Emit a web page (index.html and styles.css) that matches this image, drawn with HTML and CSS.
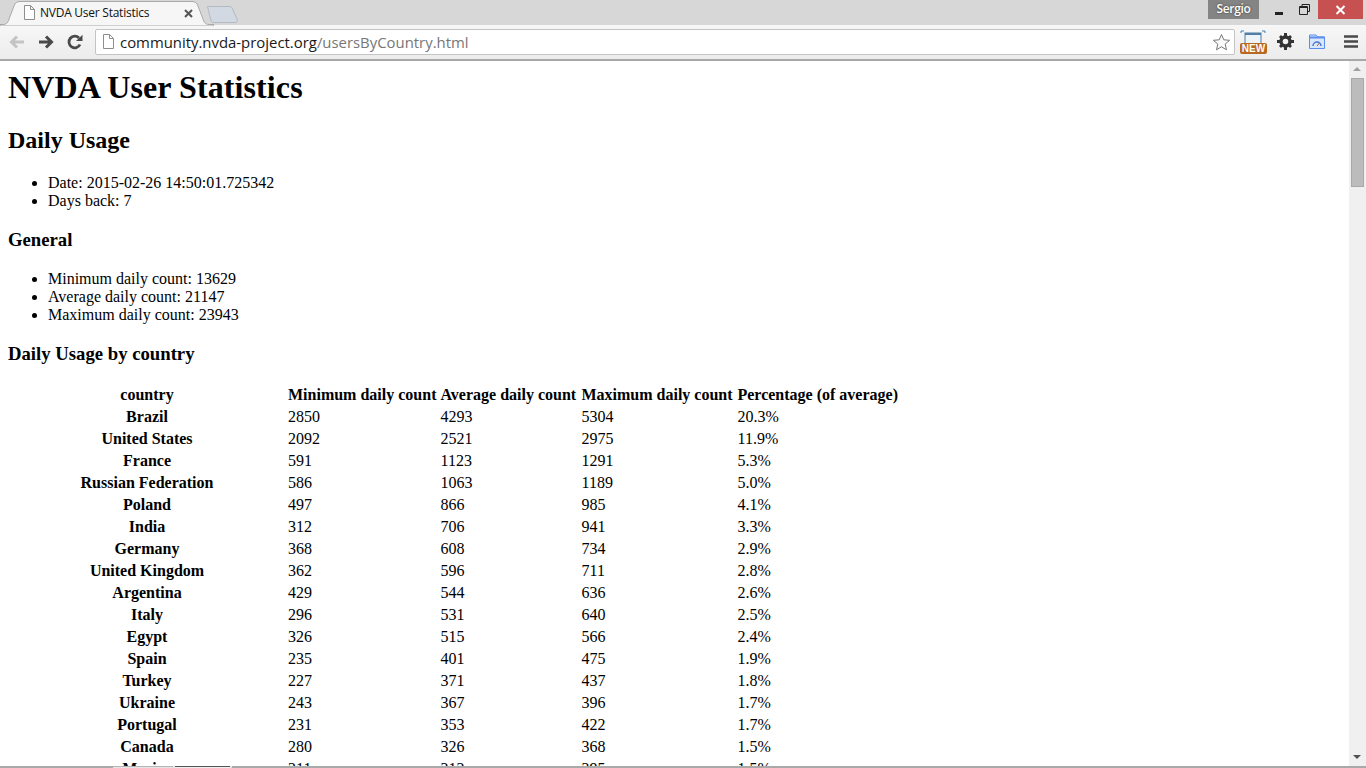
FILE: index.html
```html
<!DOCTYPE html>
<html lang="en">
<head>
<meta charset="utf-8">
<title>NVDA User Statistics</title>
<link rel="stylesheet" href="styles.css">
</head>
<body>
<div class="window">
  <div class="tabstrip">
    <svg class="tab-shape" width="214" height="26" viewBox="0 0 214 26" aria-hidden="true">
      <path d="M0 24.5 H3 C7 24.5 8 22 9 19 L14 6 C15 3 17 1.5 20 1.5 H192 C195 1.5 197 3 198 6 L203 19 C204 22 205 24.5 209 24.5 H214 V26 H0 Z" fill="#f6f6f6" stroke="#a9a9a9"/>
    </svg>
    <svg class="newtab-shape" width="34" height="20" viewBox="0 0 34 20" aria-hidden="true">
      <path d="M2.5 1.5 H24 C26 1.5 27 2.5 27.5 4 L32 14 C32.8 16 32 17.5 30 17.5 H9 C7.5 17.5 6.5 17 6 15.5 Z" fill="#d3d9e3" stroke="#b4b9c2"/>
    </svg>
    <div class="tab">
      <svg class="page-icon" width="12" height="15" viewBox="0 0 12 15" aria-hidden="true"><path d="M1.5 .5 H7.5 L11.5 4.5 V14.5 H1.5 Z M7.5 .5 V4.5 H11.5" fill="#fff" stroke="#8e8e8e"/></svg>
      <span class="tab-title">NVDA User Statistics</span>
      <svg class="tab-close" width="9" height="9" viewBox="0 0 9 9" aria-hidden="true"><path d="M1 1 L8 8 M8 1 L1 8" stroke="#555" stroke-width="2"/></svg>
    </div>
    <div class="profile">Sergio</div>
    <div class="winbtn min"><svg width="10" height="10" viewBox="0 0 10 10" aria-hidden="true"><rect x="1" y="7" width="8" height="3" fill="#222"/></svg></div>
    <div class="winbtn restore"><svg width="11" height="11" viewBox="0 0 11 11" aria-hidden="true"><path d="M3 2.5 V.5 H10.5 V7.5 H8.5 M.5 2.5 H8.5 V10.5 H.5 Z M.5 3.5 H8.5" fill="none" stroke="#222"/></svg></div>
    <div class="winbtn close"><svg width="11" height="10" viewBox="0 0 11 10" aria-hidden="true"><path d="M1.5 1 L9.5 9 M9.5 1 L1.5 9" stroke="#fff" stroke-width="2"/></svg></div>
  </div>

  <div class="toolbar">
    <svg class="nav back" width="18" height="16" viewBox="0 0 18 16" aria-hidden="true"><path d="M16 8 H4 M9 2.5 L3.5 8 L9 13.5" fill="none" stroke="#c4c4c4" stroke-width="3"/></svg>
    <svg class="nav forward" width="18" height="16" viewBox="0 0 18 16" aria-hidden="true"><path d="M2 8 H14 M9 2.5 L14.5 8 L9 13.5" fill="none" stroke="#4a4a4a" stroke-width="3"/></svg>
    <svg class="nav reload" width="16" height="16" viewBox="0 0 16 16" aria-hidden="true"><path d="M13 10.5 A5.8 5.8 0 1 1 12 4" fill="none" stroke="#4a4a4a" stroke-width="2.8"/><path d="M9 7 H15.5 V.8 Z" fill="#4a4a4a"/></svg>
    <div class="omnibox">
      <svg class="page-icon url-icon" width="12" height="15" viewBox="0 0 12 15" aria-hidden="true"><path d="M1.5 .5 H7.5 L11.5 4.5 V14.5 H1.5 Z M7.5 .5 V4.5 H11.5" fill="#fff" stroke="#8e8e8e"/></svg>
      <span class="url"><span class="host">community.nvda-project.org</span><span class="path">/usersByCountry.html</span></span>
      <svg class="star" width="19" height="18" viewBox="0 0 19 18" aria-hidden="true"><path d="M9.5 1.5 L11.8 6.8 L17.6 7.3 L13.2 11.1 L14.5 16.8 L9.5 13.8 L4.5 16.8 L5.8 11.1 L1.4 7.3 L7.2 6.8 Z" fill="#fafafa" stroke="#777"/></svg>
    </div>
    <div class="ext ext-new">
      <svg width="26" height="15" viewBox="0 0 26 15" aria-hidden="true"><path d="M1 3 V1 H4 M22 1 H25 V3" fill="none" stroke="#3f82b8"/><rect x="5" y="3" width="16" height="12" fill="#eef3f7" stroke="#4f7ea6"/><rect x="5" y="3" width="16" height="2" fill="#4f7ea6"/></svg>
      <span class="new-badge">NEW</span>
    </div>
    <svg class="ext-gear" width="17" height="17" viewBox="0 0 17 17" aria-hidden="true"><circle cx="8.5" cy="8.5" r="4.5" fill="none" stroke="#333" stroke-width="3.4"/><path d="M7 0 H10 V3 H7 Z M7 14 H10 V17 H7 Z M0 7 H3 V10 H0 Z M14 7 H17 V10 H14 Z M2 4 L4 2 L6 4 L4 6 Z M11 4 L13 2 L15 4 L13 6 Z M2 13 L4 11 L6 13 L4 15 Z M11 13 L13 11 L15 13 L13 15 Z" fill="#333"/></svg>
    <svg class="ext-folder" width="16" height="15" viewBox="0 0 16 15" aria-hidden="true"><path d="M.5 14.5 V1 H7 L8.5 3 H15.5 V14.5 Z" fill="#d9e7fb" stroke="#5b8def"/><path d="M.5 3.5 H15.5" stroke="#5b8def" stroke-width="2"/><path d="M4 12 A4 4 0 0 1 12 12" fill="none" stroke="#4a78d6" stroke-width="1.5"/><path d="M8 12 L10.5 9" stroke="#b5533c"/></svg>
    <svg class="menu-icon" width="14" height="13" viewBox="0 0 14 13" aria-hidden="true"><path d="M0 1.5 H14 M0 6.5 H14 M0 11.5 H14" stroke="#4a4a4a" stroke-width="2.4"/></svg>
  </div>

  <div class="viewport">
    <main class="page">
      <h1>NVDA User Statistics</h1>
      <h2>Daily Usage</h2>
      <ul>
        <li>Date: 2015-02-26 14:50:01.725342</li>
        <li>Days back: 7</li>
      </ul>
      <h3>General</h3>
      <ul>
        <li>Minimum daily count: 13629</li>
        <li>Average daily count: 21147</li>
        <li>Maximum daily count: 23943</li>
      </ul>
      <h3>Daily Usage by country</h3>
      <table>
        <thead>
          <tr><th class="col-country">country</th><th>Minimum daily count</th><th class="col-average">Average daily count</th><th class="col-maximum">Maximum daily count</th><th>Percentage (of average)</th></tr>
        </thead>
        <tbody>
          <tr><th>Brazil</th><td>2850</td><td>4293</td><td>5304</td><td>20.3%</td></tr>
          <tr><th>United States</th><td>2092</td><td>2521</td><td>2975</td><td>11.9%</td></tr>
          <tr><th>France</th><td>591</td><td>1123</td><td>1291</td><td>5.3%</td></tr>
          <tr><th>Russian Federation</th><td>586</td><td>1063</td><td>1189</td><td>5.0%</td></tr>
          <tr><th>Poland</th><td>497</td><td>866</td><td>985</td><td>4.1%</td></tr>
          <tr><th>India</th><td>312</td><td>706</td><td>941</td><td>3.3%</td></tr>
          <tr><th>Germany</th><td>368</td><td>608</td><td>734</td><td>2.9%</td></tr>
          <tr><th>United Kingdom</th><td>362</td><td>596</td><td>711</td><td>2.8%</td></tr>
          <tr><th>Argentina</th><td>429</td><td>544</td><td>636</td><td>2.6%</td></tr>
          <tr><th>Italy</th><td>296</td><td>531</td><td>640</td><td>2.5%</td></tr>
          <tr><th>Egypt</th><td>326</td><td>515</td><td>566</td><td>2.4%</td></tr>
          <tr><th>Spain</th><td>235</td><td>401</td><td>475</td><td>1.9%</td></tr>
          <tr><th>Turkey</th><td>227</td><td>371</td><td>437</td><td>1.8%</td></tr>
          <tr><th>Ukraine</th><td>243</td><td>367</td><td>396</td><td>1.7%</td></tr>
          <tr><th>Portugal</th><td>231</td><td>353</td><td>422</td><td>1.7%</td></tr>
          <tr><th>Canada</th><td>280</td><td>326</td><td>368</td><td>1.5%</td></tr>
          <tr><th>Mexico</th><td>211</td><td>312</td><td>395</td><td>1.5%</td></tr>
        </tbody>
      </table>
    </main>
    <div class="scrollbar">
      <div class="arrow-up"></div>
      <div class="thumb"></div>
      <div class="arrow-down"></div>
    </div>
  </div>

  <div class="taskstrip">
    <div class="seg gray seg-a"></div>
    <div class="seg pale seg-b"></div>
    <div class="seg gap"></div>
    <div class="seg dark seg-c"></div>
    <div class="seg gap seg-d"></div>
    <div class="seg gray seg-e"></div>
  </div>
</div>
</body>
</html>
```

FILE: styles.css
```css
* { box-sizing: border-box; }
html, body { margin: 0; height: 100%; overflow: hidden; background: #fff; }

.window { display: flex; flex-direction: column; height: 768px; width: 1366px; }

/* tab strip */
.tabstrip {
  position: relative;
  display: flex;
  align-items: flex-start;
  height: 25px;
  background: #d7d7d7;
  font-family: "Open Sans", sans-serif;
}
.tab-shape { position: absolute; left: 0; top: 0; }
.newtab-shape { position: absolute; left: 205px; top: 5px; }
.tab {
  position: relative;
  display: flex;
  align-items: center;
  width: 195px;
  height: 25px;
  margin-left: 23px;
}
.page-icon { flex: none; }
.tab-title { margin-left: 5px; font-size: 12px; color: #111; letter-spacing: -.25px; white-space: nowrap; }
.tab-close { position: absolute; left: 161px; top: 9px; }
.profile {
  margin-left: auto;
  width: 51px;
  height: 19px;
  background: #848484;
  color: #fff;
  font-size: 12px;
  font-weight: 600;
  letter-spacing: -.3px;
  line-height: 17px;
  text-align: center;
  text-shadow: 0 0 2px #333;
}
.winbtn { display: flex; align-items: center; justify-content: center; height: 19px; }
.min { width: 27px; margin-left: 6px; }
.restore { width: 25px; }
.close { width: 45px; margin-left: 1px; margin-right: 3px; background: #c75050; }

/* toolbar */
.toolbar {
  display: flex;
  align-items: center;
  height: 36px;
  background: linear-gradient(#f7f7f7, #ececec);
  border-bottom: 2px solid #a8a8a8;
  padding-bottom: 1px;
}
.nav { flex: none; }
.back { margin-left: 8px; }
.forward { margin-left: 11px; }
.reload { margin-left: 12px; }
.omnibox {
  display: flex;
  align-items: center;
  width: 1140px;
  height: 26px;
  margin-left: 12px;
  background: #fff;
  border: 1px solid #c4c4c4;
  border-radius: 2px;
  padding-left: 6px;
}
.url-icon { margin-right: 6px; margin-left: 0; }
.url { font-family: "Open Sans", sans-serif; font-size: 14.9px; white-space: nowrap; }
.host { color: #1a1a1a; }
.path { color: #777; }
.star { margin-left: auto; margin-right: 3px; }
.ext { flex: none; }
.ext-new { position: relative; width: 28px; height: 24px; margin-left: 4px; text-align: center; }
.ext-new svg { display: block; margin: 0 auto; }
.new-badge {
  position: absolute;
  left: 1px;
  top: 13px;
  width: 27px;
  height: 11px;
  background: #b8691f;
  border-radius: 2px;
  color: #fff;
  font: bold 10px/11px "Liberation Sans", sans-serif;
  text-align: center;
}
.ext-gear { margin-left: 10px; flex: none; }
.ext-folder { margin-left: 15px; flex: none; }
.menu-icon { margin-left: 19px; flex: none; }

/* page */
.viewport { display: flex; flex: 1; min-height: 0; }
.page {
  flex: 1;
  min-width: 0;
  overflow: hidden;
  padding: 8px;
  font-family: "Liberation Serif", "Times New Roman", serif;
  font-size: 16px;
  color: #000;
}
h1 { margin: 0 0 21.44px; font-size: 32px; letter-spacing: .1px; }
h2 { margin: 19.92px 0; font-size: 24px; }
h3 { margin: 18.72px 0; font-size: 18.72px; }
ul { margin: 16px 0; padding-left: 40px; }
table { border-spacing: 2px; }
th, td { padding: 1px; white-space: nowrap; text-align: left; }
th:first-child { text-align: center; padding-right: 2px; }
.col-country { width: 275px; }
.col-average { width: 139px; }
.col-maximum { width: 154px; }

/* scrollbar */
.scrollbar {
  position: relative;
  flex: none;
  width: 17px;
  background: #f0f0f0;
}
.arrow-up, .arrow-down { position: absolute; left: 4px; width: 0; height: 0; border-left: 4px solid transparent; border-right: 4px solid transparent; }
.arrow-up { top: 6px; border-bottom: 4px solid #a0a0a0; }
.arrow-down { bottom: 7px; border-top: 4px solid #505050; }
.thumb {
  position: absolute;
  left: 2px;
  top: 17px;
  width: 13px;
  height: 109px;
  background: #bcbcbc;
  border: 1px solid #a8a8a8;
}

/* bottom edge */
.taskstrip { display: flex; flex: none; height: 2px; background: #a9a9a9; }
.seg { height: 2px; }
.seg-a { width: 113px; }
.seg-b { width: 60px; }
.seg.gap { width: 2px; background: #e4e4e4; }
.seg-c { width: 55px; }
.seg-d { width: 4px; }
.seg-e { flex: 1; }
.gray { background: #a9a9a9; }
.pale { background: #e4e4e4; border-top: 1px solid #b5b5b5; }
.dark { background: #eee; border-top: 1px solid #555; }
```
